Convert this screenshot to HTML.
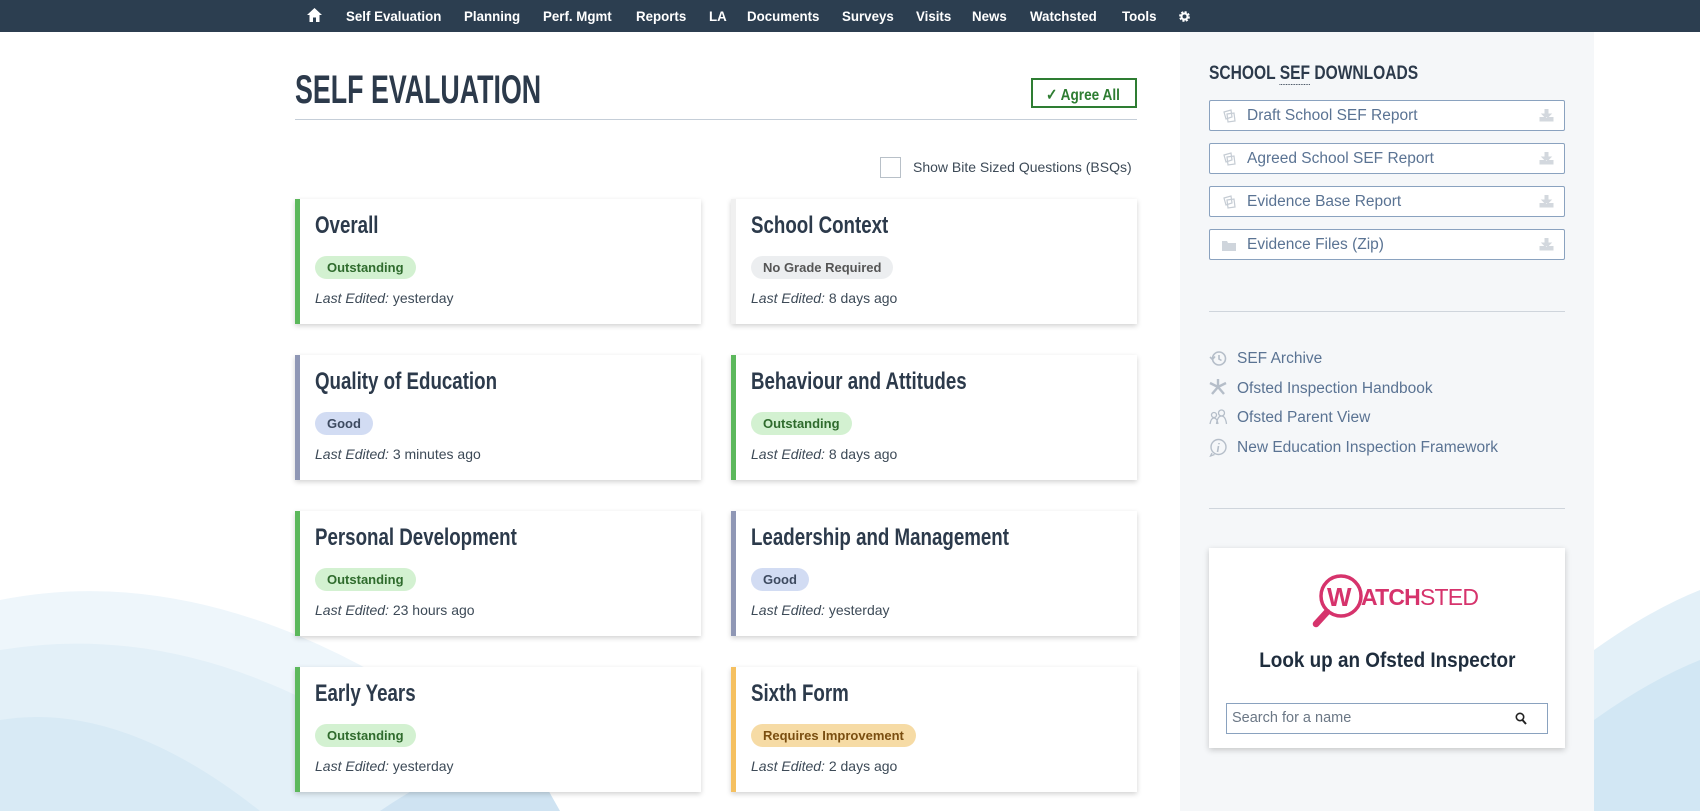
<!DOCTYPE html>
<html><head><meta charset="utf-8"><style>
*{box-sizing:border-box;margin:0;padding:0}
body{width:1700px;height:811px;overflow:hidden;background:#fff;font-family:"Liberation Sans",sans-serif;position:relative;color:#2c3a4b}
.cond{font-family:"Liberation Sans Narrow","Liberation Sans",sans-serif;font-weight:bold;white-space:nowrap;transform-origin:0 50%}
#nav{position:absolute;left:0;top:0;width:1700px;height:32px;background:#2c3e50}
#nav span{position:absolute;top:8px;color:#fff;font-size:14px;font-weight:bold;transform:scaleX(.95);transform-origin:0 50%;white-space:nowrap}
.bg{position:absolute;left:0;top:0}
#side{position:absolute;left:1180px;top:32px;width:414px;height:779px;background:#f5f7f9}
h1{position:absolute;left:295px;top:68px;font-size:40px;color:#2c3a4b;transform:scaleX(.67)}
.rule{position:absolute;left:295px;top:119px;width:842px;height:1px;background:#c5ced8}
.agree{position:absolute;left:1031px;top:78px;width:106px;height:30px;border:2px solid #2e7d32;color:#2e7d32;background:#fff}
.agree span{position:absolute;left:13px;top:5px;font-size:16px;transform:scaleX(.85)}
.cb{position:absolute;left:880px;top:157px;width:21px;height:21px;border:1px solid #b8c0c8;background:#fff}
.cbt{position:absolute;left:913px;top:159px;font-size:14px;color:#3d4a57}
.card{position:absolute;width:406px;height:125px;background:#fff;box-shadow:0 2px 5px rgba(0,0,0,.18);border-left:5px solid #5cb85c}
.card .t{position:absolute;left:15px;top:13px;font-size:24px;color:#2c3a4b;transform:scaleX(.78)}
.badge{position:absolute;left:15px;top:57px;height:23px;line-height:23px;padding:0 12px;border-radius:12px;font-size:13px;font-weight:bold}
.g{background:#d3f1d1;color:#2f6b2d}.gd{background:#d2dcf3;color:#3d4a60}.n{background:#eceef0;color:#555}.r{background:#f6dba5;color:#7a4e10}
.le{position:absolute;left:15px;top:91px;font-size:14px;color:#3d4a57}
.le i{font-style:italic}
.sh{position:absolute;left:1209px;top:63px;font-size:19px;color:#2c3a4b;transform:scaleX(.82)}
.dl{position:absolute;left:1209px;width:356px;height:31px;border:1px solid #8aa2bf;border-radius:2px;background:#fff;font-size:15.5px;color:#5a7393;line-height:29px;padding-left:37px}
.dl svg.i{position:absolute;left:12px;top:8px}
.dl svg.d{position:absolute;right:10px;top:8px}
.hr{position:absolute;left:1209px;width:356px;height:1px;background:#cfd5dc}
.lk{position:absolute;left:1237px;font-size:15.5px;color:#5a7393}
.lki{position:absolute;left:1209px}
.wc{position:absolute;left:1209px;top:548px;width:356px;height:200px;background:#fff;box-shadow:0 2px 6px rgba(0,0,0,.2)}
</style></head><body>
<svg class="bg" width="1700" height="811">
<path d="M0 600 Q200 560 420 700 Q520 770 560 811 L0 811Z" fill="#eef6fb"/>
<path d="M0 650 Q180 620 360 730 Q420 770 450 811 L0 811Z" fill="#e3f0f8"/>
<path d="M0 720 Q120 700 260 811 L0 811Z" fill="#d8eaf5"/>
<path d="M380 811 Q440 770 520 740 L560 811Z" fill="#cfe3f2"/>
<path d="M1594 650 Q1650 610 1700 590 L1700 811 L1594 811Z" fill="#e3f0f8"/>
<path d="M1594 720 Q1650 680 1700 660 L1700 811 L1594 811Z" fill="#d2e7f4"/>
</svg>
<div id="side"></div>
<div id="nav">
<svg style="position:absolute;left:306px;top:7px" width="17" height="16" viewBox="0 0 17 16"><path d="M8.5 1 L1 8 H3.5 V15 H7 V10.5 H10 V15 H13.5 V8 H16Z" fill="#fff"/></svg>
<span style="left:346px">Self Evaluation</span><span style="left:464px">Planning</span><span style="left:543px">Perf. Mgmt</span><span style="left:636px">Reports</span><span style="left:709px">LA</span><span style="left:747px">Documents</span><span style="left:842px">Surveys</span><span style="left:916px">Visits</span><span style="left:972px">News</span><span style="left:1030px">Watchsted</span><span style="left:1122px">Tools</span>
<svg style="position:absolute;left:1178px;top:10px" width="13" height="13" viewBox="0 0 13 13"><circle cx="6.5" cy="6.5" r="4.2" fill="none" stroke="#fff" stroke-width="2.4" stroke-dasharray="2 1.3"/><circle cx="6.5" cy="6.5" r="3" fill="none" stroke="#fff" stroke-width="2"/></svg>
</div>
<h1 class="cond">SELF EVALUATION</h1>
<div class="rule"></div>
<div class="agree"><span class="cond">✓ Agree All</span></div>
<div class="cb"></div><div class="cbt">Show Bite Sized Questions (BSQs)</div>

<div class="card" style="left:295px;top:199px"><div class="t cond">Overall</div><div class="badge g">Outstanding</div><div class="le"><i>Last Edited:</i> yesterday</div></div>
<div class="card" style="left:731px;top:199px;border-left-color:#f0f0f0"><div class="t cond">School Context</div><div class="badge n">No Grade Required</div><div class="le"><i>Last Edited:</i> 8 days ago</div></div>
<div class="card" style="left:295px;top:355px;border-left-color:#8f97b5"><div class="t cond">Quality of Education</div><div class="badge gd">Good</div><div class="le"><i>Last Edited:</i> 3 minutes ago</div></div>
<div class="card" style="left:731px;top:355px"><div class="t cond">Behaviour and Attitudes</div><div class="badge g">Outstanding</div><div class="le"><i>Last Edited:</i> 8 days ago</div></div>
<div class="card" style="left:295px;top:511px"><div class="t cond">Personal Development</div><div class="badge g">Outstanding</div><div class="le"><i>Last Edited:</i> 23 hours ago</div></div>
<div class="card" style="left:731px;top:511px;border-left-color:#8f97b5"><div class="t cond">Leadership and Management</div><div class="badge gd">Good</div><div class="le"><i>Last Edited:</i> yesterday</div></div>
<div class="card" style="left:295px;top:667px"><div class="t cond">Early Years</div><div class="badge g">Outstanding</div><div class="le"><i>Last Edited:</i> yesterday</div></div>
<div class="card" style="left:731px;top:667px;border-left-color:#f5c060"><div class="t cond">Sixth Form</div><div class="badge r">Requires Improvement</div><div class="le"><i>Last Edited:</i> 2 days ago</div></div>

<div class="sh cond">SCHOOL <span style="border-bottom:1px dotted #2c3a4b">SEF</span> DOWNLOADS</div>
<div class="dl" style="top:100px"><svg class="i" width="15" height="15" viewBox="0 0 15 15"><path d="M2 3 L9 1 L10 8 L4 10Z M5 5 L12 4 L13 12 L6 13Z" fill="none" stroke="#c5ccd4" stroke-width="1.2"/></svg>Draft School SEF Report<svg class="d" width="15" height="13" viewBox="0 0 15 13"><path d="M6 0h3v5h3l-4.5 4.5L3 5h3z M1 8v4h13V8" fill="#d3d8de" stroke="#d3d8de"/></svg></div>
<div class="dl" style="top:143px"><svg class="i" width="15" height="15" viewBox="0 0 15 15"><path d="M2 3 L9 1 L10 8 L4 10Z M5 5 L12 4 L13 12 L6 13Z" fill="none" stroke="#c5ccd4" stroke-width="1.2"/></svg>Agreed School SEF Report<svg class="d" width="15" height="13" viewBox="0 0 15 13"><path d="M6 0h3v5h3l-4.5 4.5L3 5h3z M1 8v4h13V8" fill="#d3d8de" stroke="#d3d8de"/></svg></div>
<div class="dl" style="top:186px"><svg class="i" width="15" height="15" viewBox="0 0 15 15"><path d="M2 3 L9 1 L10 8 L4 10Z M5 5 L12 4 L13 12 L6 13Z" fill="none" stroke="#c5ccd4" stroke-width="1.2"/></svg>Evidence Base Report<svg class="d" width="15" height="13" viewBox="0 0 15 13"><path d="M6 0h3v5h3l-4.5 4.5L3 5h3z M1 8v4h13V8" fill="#d3d8de" stroke="#d3d8de"/></svg></div>
<div class="dl" style="top:229px"><svg class="i" width="15" height="15" viewBox="0 0 15 15"><path d="M0 3h5l1 2h8v8H0z" fill="#cfd5dc"/></svg>Evidence Files (Zip)<svg class="d" width="15" height="13" viewBox="0 0 15 13"><path d="M6 0h3v5h3l-4.5 4.5L3 5h3z M1 8v4h13V8" fill="#d3d8de" stroke="#d3d8de"/></svg></div>
<div class="hr" style="top:311px"></div>
<svg class="lki" style="top:350px" width="18" height="17" viewBox="0 0 18 17"><circle cx="10" cy="8.5" r="6.5" fill="none" stroke="#b5bec9" stroke-width="1.6"/><path d="M10 5v4l2.5 1.5M1 7l2.5 2.5 2.5-3" fill="none" stroke="#b5bec9" stroke-width="1.6"/></svg>
<div class="lk" style="top:350px">SEF Archive</div>
<svg class="lki" style="top:379px" width="18" height="17" viewBox="0 0 18 17"><path d="M9 0v8M1 4l8 4 8-4M3 15l6-7 6 7" fill="none" stroke="#b5bec9" stroke-width="2.4"/></svg>
<div class="lk" style="top:380px">Ofsted Inspection Handbook</div>
<svg class="lki" style="top:409px" width="19" height="16" viewBox="0 0 19 16"><circle cx="5" cy="6" r="2.5" fill="none" stroke="#b5bec9" stroke-width="1.3"/><circle cx="12.5" cy="4" r="3" fill="none" stroke="#b5bec9" stroke-width="1.3"/><path d="M1 15q1-6 4-6t4 6M7.5 15q1-8 5-8t5 8" fill="none" stroke="#b5bec9" stroke-width="1.3"/></svg>
<div class="lk" style="top:409px">Ofsted Parent View</div>
<svg class="lki" style="top:438px" width="19" height="19" viewBox="0 0 19 19"><circle cx="9.5" cy="9" r="7.5" fill="none" stroke="#b5bec9" stroke-width="1.4"/><path d="M3 15l-1.5 3 4-1.5" fill="none" stroke="#b5bec9" stroke-width="1.3"/><path d="M10 5v1.2M9.5 8l-1 6" stroke="#b5bec9" stroke-width="1.6"/></svg>
<div class="lk" style="top:439px">New Education Inspection Framework</div>
<div class="hr" style="top:508px"></div>
<div class="wc">
<svg style="position:absolute;left:100px;top:20px" width="170" height="64" viewBox="0 0 170 64"><circle cx="32" cy="28" r="20" fill="none" stroke="#d6336c" stroke-width="3.5"/><line x1="18" y1="44" x2="7" y2="56" stroke="#d6336c" stroke-width="6.5" stroke-linecap="round"/><text x="18" y="38" font-family="Liberation Sans" font-weight="bold" font-size="26" fill="#d6336c">W</text><text x="52" y="37" font-family="Liberation Sans" font-size="23" fill="#d6336c" letter-spacing="-0.8"><tspan font-weight="bold">ATCH</tspan>STED</text></svg>
<div style="position:absolute;left:0;width:356px;text-align:center;top:101px"><span class="cond" style="display:inline-block;font-size:21px;color:#1f2d3d;transform:scaleX(.9);transform-origin:50% 50%">Look up an Ofsted Inspector</span></div>
<div style="position:absolute;left:17px;top:155px;width:322px;height:31px;border:1px solid #8aa2bf;font-size:14.5px;color:#6b7785;line-height:29px;padding-left:5px">Search for a name<svg style="position:absolute;right:20px;top:8px" width="12" height="13" viewBox="0 0 12 13"><circle cx="5" cy="5" r="3.7" fill="none" stroke="#222" stroke-width="1.6"/><line x1="7.5" y1="8" x2="11" y2="12" stroke="#222" stroke-width="2"/></svg></div>
</div>
</body></html>
